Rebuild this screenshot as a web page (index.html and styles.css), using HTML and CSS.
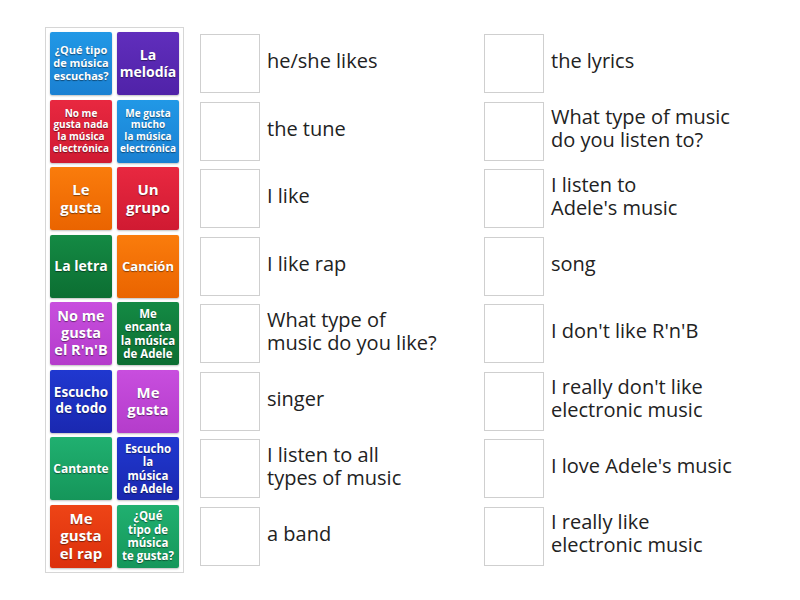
FILE: index.html
```html
<!DOCTYPE html>
<html lang="es">
<head>
<meta charset="utf-8">
<title>Música</title>
<link rel="stylesheet" href="styles.css">
</head>
<body>
<div class="page">
  <div class="panel">
    <div class="tile blue f11">¿Qué tipo<br>de música<br>escuchas?</div>
    <div class="tile purple f14">La<br>melodía</div>
    <div class="tile red f10">No me<br>gusta nada<br>la música<br>electrónica</div>
    <div class="tile blue f10">Me gusta<br>mucho<br>la música<br>electrónica</div>
    <div class="tile orange f15">Le<br>gusta</div>
    <div class="tile red f15">Un<br>grupo</div>
    <div class="tile dgreen f14">La letra</div>
    <div class="tile orange f13">Canción</div>
    <div class="tile magenta f145">No me<br>gusta<br>el R'n'B</div>
    <div class="tile dgreen f115">Me<br>encanta<br>la música<br>de Adele</div>
    <div class="tile dblue f135">Escucho<br>de todo</div>
    <div class="tile magenta f15">Me<br>gusta</div>
    <div class="tile green f12">Cantante</div>
    <div class="tile dblue f115">Escucho<br>la<br>música<br>de Adele</div>
    <div class="tile redorange f15">Me<br>gusta<br>el rap</div>
    <div class="tile green f115">¿Qué<br>tipo de<br>música<br>te gusta?</div>
  </div>
  <div class="col col1">
    <div class="row"><div class="box"></div><div class="label">he/she likes</div></div>
    <div class="row"><div class="box"></div><div class="label">the tune</div></div>
    <div class="row"><div class="box"></div><div class="label">I like</div></div>
    <div class="row"><div class="box"></div><div class="label">I like rap</div></div>
    <div class="row"><div class="box"></div><div class="label">What type of<br>music do you like?</div></div>
    <div class="row"><div class="box"></div><div class="label">singer</div></div>
    <div class="row"><div class="box"></div><div class="label">I listen to all<br>types of music</div></div>
    <div class="row"><div class="box"></div><div class="label">a band</div></div>
  </div>
  <div class="col col2">
    <div class="row"><div class="box"></div><div class="label">the lyrics</div></div>
    <div class="row"><div class="box"></div><div class="label">What type of music<br>do you listen to?</div></div>
    <div class="row"><div class="box"></div><div class="label">I listen to<br>Adele's music</div></div>
    <div class="row"><div class="box"></div><div class="label">song</div></div>
    <div class="row"><div class="box"></div><div class="label">I don't like R'n'B</div></div>
    <div class="row"><div class="box"></div><div class="label">I really don't like<br>electronic music</div></div>
    <div class="row"><div class="box"></div><div class="label">I love Adele's music</div></div>
    <div class="row"><div class="box"></div><div class="label">I really like<br>electronic music</div></div>
  </div>
</div>
</body>
</html>
```
FILE: styles.css
```css
html, body {
  margin: 0;
  padding: 0;
  background: #ffffff;
}

.page {
  display: flex;
  align-items: flex-start;
  padding: 27px 0 0 45px;
  font-family: "Open Sans", "Liberation Sans", sans-serif;
}

.panel {
  display: grid;
  grid-template-columns: 62px 62px;
  grid-auto-rows: 63px;
  column-gap: 5px;
  row-gap: 4.5px;
  padding: 4px;
  border: 1px solid #d6d6d6;
}

.tile {
  display: flex;
  align-items: center;
  justify-content: center;
  text-align: center;
  color: #ffffff;
  font-weight: 700;
  line-height: 1.15;
  border-radius: 2px;
  text-shadow: 0 1px 1px rgba(0, 0, 0, 0.45);
  box-shadow: 0 1px 2px rgba(0, 0, 0, 0.25);
}

.f10 { font-size: 10px; line-height: 11.6px; }
.f11 { font-size: 11px; line-height: 12.7px; }
.f115 { font-size: 11.5px; line-height: 13.3px; }
.f12 { font-size: 12px; }
.f13 { font-size: 13px; }
.f135 { font-size: 13.5px; line-height: 15.6px; }
.f14 { font-size: 14px; line-height: 16.2px; }
.f145 { font-size: 14.5px; line-height: 16.7px; }
.f15 { font-size: 15px; line-height: 17.3px; }

.blue { background: linear-gradient(#2198e6, #1a80d2); }
.purple { background: linear-gradient(#602ebc, #5022a8); }
.red { background: linear-gradient(#e82840, #d01a32); }
.orange { background: linear-gradient(#fa7c0c, #ea6400); }
.dgreen { background: linear-gradient(#148a44, #0c6e32); }
.magenta { background: linear-gradient(#c84ede, #b43ccb); }
.dblue { background: linear-gradient(#2038d0, #1a28b0); }
.green { background: linear-gradient(#20b070, #15965a); }
.redorange { background: linear-gradient(#ee4416, #dc300c); }

.col {
  display: flex;
  flex-direction: column;
  gap: 8.5px;
  margin-top: 7px;
}

.col1 {
  margin-left: 16px;
  width: 284px;
}

.row {
  display: flex;
  align-items: center;
  height: 59px;
}

.box {
  flex: none;
  width: 58px;
  height: 57px;
  border: 1px solid #cfcfcf;
  background: #ffffff;
}

.label {
  margin-left: 7px;
  margin-bottom: 6px;
  font-size: 20px;
  line-height: 23px;
  color: #222222;
}
```
